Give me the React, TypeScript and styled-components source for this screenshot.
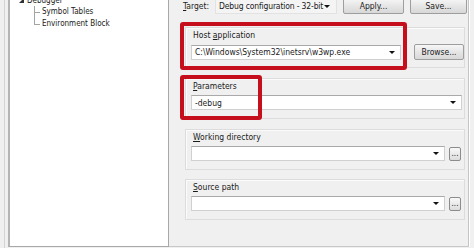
import styled, { createGlobalStyle } from 'styled-components';

const GlobalStyle = createGlobalStyle`
  html, body {
    margin: 0;
    padding: 0;
    background: #f0f0f0;
  }
  body {
    font-family: "DejaVu Sans Condensed", "Liberation Sans", Arial, sans-serif;
    font-size: 8.5px;
    color: #1a1a1a;
  }
`;

const Frame = styled.div`
  width: 474px;
  height: 248px;
  display: flex;
  overflow: hidden;
  background: #f0f0f0;
`;

const Sidebar = styled.div`
  width: 169px;
  flex-shrink: 0;
  display: flex;
  padding-left: 4px;
  box-sizing: border-box;
`;

const SidebarEdge = styled.div`
  flex: 1;
  display: flex;
  border-left: 1px solid #d4d4d4;
  padding-left: 3px;
`;

const TreeBox = styled.div`
  flex: 1;
  background: #fff;
  border-left: 2px solid #b4b4b4;
  border-right: 1px solid #a8a8a8;
  border-bottom: 1px solid #a8a8a8;
  height: 246px;
  overflow: hidden;
  font-size: 8px;
`;

const TreeList = styled.div`
  margin-top: -6px;
`;

const RootItem = styled.div`
  display: flex;
  align-items: center;
  height: 12px;
  padding-left: 9px;
  gap: 3px;
`;

const Expander = styled.span`
  width: 0;
  height: 0;
  border-left: 5px solid transparent;
  border-bottom: 5px solid #333;
`;

const ChildList = styled.div`
  margin-left: 24px;
`;

const ChildItem = styled.div<{ $last?: boolean }>`
  position: relative;
  height: 12px;
  line-height: 12px;
  padding-left: 8px;

  &::before {
    content: '';
    position: absolute;
    left: 0;
    top: 0;
    height: ${(p) => (p.$last ? '7px' : '12px')};
    border-left: 1px solid #a4a4a4;
  }

  &::after {
    content: '';
    position: absolute;
    left: 0;
    top: 6px;
    width: 6px;
    border-top: 1px solid #a4a4a4;
  }
`;

const Panel = styled.div`
  position: relative;
  flex: 1;
  display: flex;
`;

const Content = styled.div`
  width: 299px;
  height: 246px;
  border-right: 1px solid #c4c4c4;
  border-bottom: 1px solid #c8c8c8;
  box-shadow: 1px 0 0 #fff;
  display: flex;
  flex-direction: column;
`;

const TargetRow = styled.div`
  display: flex;
  align-items: center;
  height: 18px;
  margin-top: -3px;
  padding-left: 14px;
`;

const TargetLabel = styled.span`
  width: 32px;
`;

const Select = styled.div<{ $width: number }>`
  width: ${(p) => p.$width}px;
  height: 15px;
  box-sizing: border-box;
  display: flex;
  align-items: center;
  justify-content: space-between;
  padding: 0 5px 0 3px;
  background: #fff;
  border: 1px solid #d0d0d0;
  border-top-color: #a9a9a9;
  white-space: nowrap;
`;

const FlatSelect = styled(Select)`
  background: #f4f4f4;
  border-color: #e2e2e2;
  letter-spacing: -0.15px;
  padding-right: 6px;
`;

const Arrow = styled.span`
  flex-shrink: 0;
  width: 0;
  height: 0;
  border-left: 3px solid transparent;
  border-right: 3px solid transparent;
  border-top: 3px solid #111;
`;

const Button = styled.div<{ $width: number; $gap?: number }>`
  width: ${(p) => p.$width}px;
  height: 16px;
  margin-left: ${(p) => p.$gap ?? 6}px;
  box-sizing: border-box;
  display: flex;
  align-items: center;
  justify-content: center;
  border: 1px solid #9e9e9e;
  border-radius: 2px;
  background: linear-gradient(#f6f6f6, #e4e4e4 55%, #d8d8d8);
  color: #222;
`;

const DotsButton = styled.div`
  width: 12px;
  height: 14px;
  margin-left: 4px;
  box-sizing: border-box;
  display: flex;
  align-items: flex-end;
  justify-content: center;
  padding-bottom: 2px;
  font-size: 8px;
  line-height: 8px;
  border: 1px solid #8c8c8c;
  border-radius: 2px;
  background: linear-gradient(#f8f8f8, #dcdcdc);
`;

const Group = styled.div<{ $gap: number }>`
  width: 280px;
  height: 41px;
  box-sizing: border-box;
  margin: ${(p) => p.$gap}px 0 0 16px;
  padding: 1px 0 0 5px;
  border: 1px solid #dcdcdc;
  box-shadow: inset 1px 1px 0 #fbfbfb;
  display: flex;
  flex-direction: column;
`;

const GroupLabel = styled.div`
  height: 12px;
  line-height: 12px;
  padding-left: 2px;
`;

const FieldRow = styled.div`
  display: flex;
  align-items: center;
  margin-top: 3px;
`;

const Key = styled.span`
  text-decoration: underline;
`;

const Highlight = styled.div<{ $left: number; $top: number; $w: number; $h: number }>`
  position: absolute;
  left: ${(p) => p.$left}px;
  top: ${(p) => p.$top}px;
  width: ${(p) => p.$w}px;
  height: ${(p) => p.$h}px;
  box-sizing: border-box;
  border: 4px solid #c50f1d;
  border-radius: 3px;
  pointer-events: none;
`;

export default function App() {
  return (
    <Frame>
      <GlobalStyle />
      <Sidebar>
        <SidebarEdge>
          <TreeBox>
            <TreeList>
              <RootItem>
                <Expander />
                <span>Debugger</span>
              </RootItem>
              <ChildList>
                <ChildItem>Symbol Tables</ChildItem>
                <ChildItem $last>Environment Block</ChildItem>
              </ChildList>
            </TreeList>
          </TreeBox>
        </SidebarEdge>
      </Sidebar>

      <Panel>
        <Content>
          <TargetRow>
            <TargetLabel>
              <Key>T</Key>arget:
            </TargetLabel>
            <FlatSelect $width={122}>
              <span>Debug configuration - 32-bit</span>
              <Arrow />
            </FlatSelect>
            <Button $width={61}>Apply...</Button>
            <Button $width={57}>Save...</Button>
          </TargetRow>

          <Group $gap={12}>
            <GroupLabel>
              Host <Key>a</Key>pplication
            </GroupLabel>
            <FieldRow>
              <Select $width={210}>
                <span>C:\Windows\System32\inetsrv\w3wp.exe</span>
                <Arrow />
              </Select>
              <Button $width={50} $gap={13}>
                Browse...
              </Button>
            </FieldRow>
          </Group>

          <Group $gap={10}>
            <GroupLabel>
              <Key>P</Key>arameters
            </GroupLabel>
            <FieldRow>
              <Select $width={271}>
                <span>-debug</span>
                <Arrow />
              </Select>
            </FieldRow>
          </Group>

          <Group $gap={10}>
            <GroupLabel>
              <Key>W</Key>orking directory
            </GroupLabel>
            <FieldRow>
              <Select $width={254}>
                <span />
                <Arrow />
              </Select>
              <DotsButton>...</DotsButton>
            </FieldRow>
          </Group>

          <Group $gap={9}>
            <GroupLabel>
              <Key>S</Key>ource path
            </GroupLabel>
            <FieldRow>
              <Select $width={254}>
                <span />
                <Arrow />
              </Select>
              <DotsButton>...</DotsButton>
            </FieldRow>
          </Group>
        </Content>

        <Highlight $left={11} $top={22} $w={227} $h={48} />
        <Highlight $left={11} $top={75} $w={82} $h={45} />
      </Panel>
    </Frame>
  );
}
